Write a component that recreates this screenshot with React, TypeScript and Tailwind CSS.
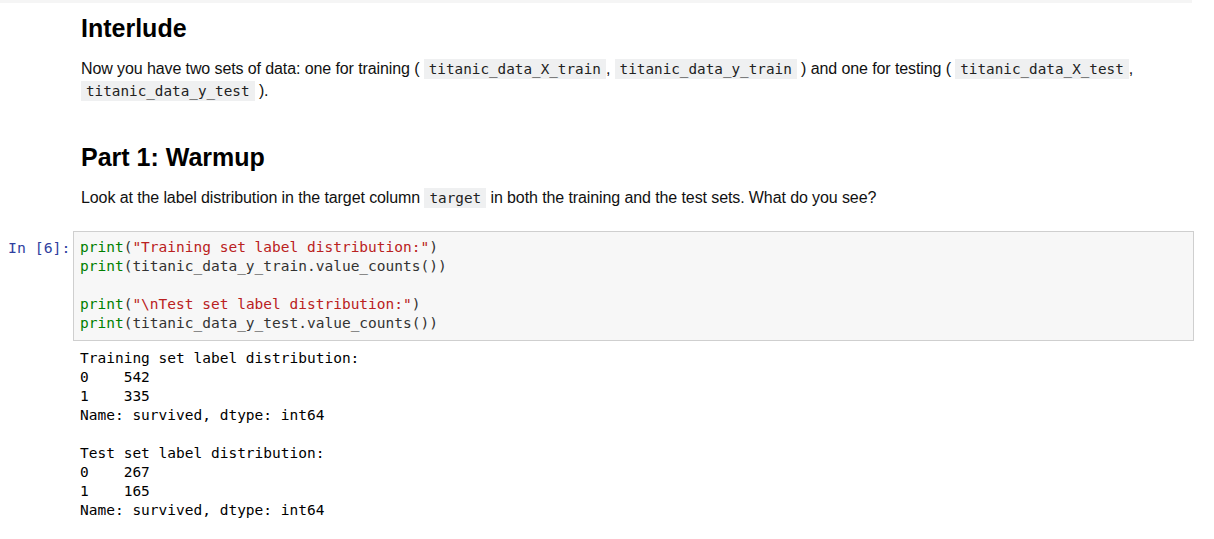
import React from "react";

const mono = "font-['DejaVu_Sans_Mono',monospace]";

function IC({ children }: { children: React.ReactNode }) {
  return (
    <code className={`${mono} text-[14.3px] tracking-normal bg-[#eff0f1] px-[5px] py-[2px] text-[#222]`}>
      {children}
    </code>
  );
}

export default function App() {
  return (
    <div className="w-[1214px] h-[539px] bg-white overflow-hidden font-['Liberation_Sans',Arial,sans-serif] text-black">
      <div className="h-[3px] bg-[#f5f5f5] mr-[22px]" />
      <div className="pl-[81px] pr-[20px]">
        <h1 className="text-[25px] font-bold leading-[29px] mt-[11px]">Interlude</h1>
        <p className="text-[16px] leading-[22px] mt-[15px] text-[#111] tracking-[-0.1px]">
          Now you have two sets of data: one for training ( <IC>titanic_data_X_train</IC>, <IC>titanic_data_y_train</IC> ) and one for testing ( <IC>titanic_data_X_test</IC>,{" "}
          <IC>titanic_data_y_test</IC> ).
        </p>
        <h2 className="text-[25px] font-bold leading-[29px] mt-[41px]">Part 1: Warmup</h2>
        <p className="text-[16px] leading-[22px] mt-[15px] text-[#111] tracking-[-0.1px]">
          Look at the label distribution in the target column <IC>target</IC> in both the training and the test sets. What do you see?
        </p>
      </div>
      <div className="flex mt-[22px] pr-[20px]">
        <div className={`w-[73px] shrink-0 ${mono} text-[14.8px] leading-[19px] text-[#303f9f] pl-[8px] pt-[7px]`}>
          In&nbsp;[6]:
        </div>
        <div className="flex-1">
          <div className={`border border-[#cfcfcf] bg-[#f7f7f7] pl-[6px] pt-[6px] pb-[7px] ${mono} text-[14.5px] leading-[19px] text-[#333] whitespace-pre`}>
            <div><span className="text-[#008000]">print</span>(<span className="text-[#ba2121]">"Training set label distribution:"</span>)</div>
            <div><span className="text-[#008000]">print</span>(titanic_data_y_train.value_counts())</div>
            <div>&nbsp;</div>
            <div><span className="text-[#008000]">print</span>(<span className="text-[#ba2121]">"\nTest set label distribution:"</span>)</div>
            <div><span className="text-[#008000]">print</span>(titanic_data_y_test.value_counts())</div>
          </div>
          <div className={`pl-[7px] pt-[8px] ${mono} text-[14.5px] leading-[19px] text-black whitespace-pre`}>
            <div>Training set label distribution:</div>
            <div>0    542</div>
            <div>1    335</div>
            <div>Name: survived, dtype: int64</div>
            <div>&nbsp;</div>
            <div>Test set label distribution:</div>
            <div>0    267</div>
            <div>1    165</div>
            <div>Name: survived, dtype: int64</div>
          </div>
        </div>
      </div>
    </div>
  );
}
